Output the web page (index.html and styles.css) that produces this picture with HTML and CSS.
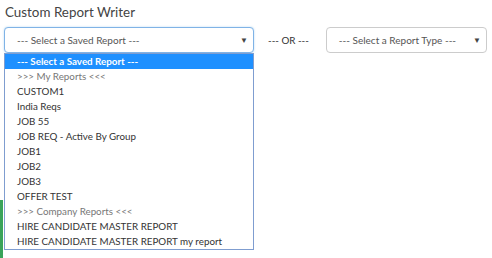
FILE: index.html
```html
<!DOCTYPE html>
<html lang="en">
<head>
    <meta charset="UTF-8">
    <title>Custom Report Writer</title>
    <link rel="stylesheet" href="styles.css">
</head>
<body>
    <div class="page">
        <h1 class="title">Custom Report Writer</h1>

        <div class="picker-row">
            <div class="picker picker-saved">
                <div class="select select-open">
                    <span>--- Select a Saved Report ---</span>
                    <span class="arrow">&#9660;</span>
                </div>
                <ul class="options">
                    <li class="selected">--- Select a Saved Report ---</li>
                    <li class="group">&gt;&gt;&gt; My Reports &lt;&lt;&lt;</li>
                    <li>CUSTOM1</li>
                    <li>India Reqs</li>
                    <li>JOB 55</li>
                    <li>JOB REQ - Active By Group</li>
                    <li>JOB1</li>
                    <li>JOB2</li>
                    <li>JOB3</li>
                    <li>OFFER TEST</li>
                    <li class="group">&gt;&gt;&gt; Company Reports &lt;&lt;&lt;</li>
                    <li>HIRE CANDIDATE MASTER REPORT</li>
                    <li>HIRE CANDIDATE MASTER REPORT my report</li>
                </ul>
            </div>

            <span class="or">--- OR ---</span>

            <div class="picker picker-type">
                <div class="select">
                    <span>--- Select a Report Type ---</span>
                    <span class="arrow">&#9660;</span>
                </div>
            </div>
        </div>

        <div class="side-tab"></div>
    </div>
</body>
</html>
```

FILE: styles.css
```css
* {
    margin: 0;
    padding: 0;
    box-sizing: border-box;
}

body {
    font-family: Lato, "Open Sans", sans-serif;
    background: #fff;
    color: #333;
    overflow: hidden;
}

.page {
    position: relative;
    height: 258px;
    padding: 2px 4px 0 4px;
}

.title {
    font-size: 13.4px;
    font-weight: normal;
    color: #444;
    padding-left: 1px;
    line-height: 20px;
}

.picker-row {
    display: flex;
    align-items: center;
    margin-top: 5px;
}

.picker {
    position: relative;
    flex-shrink: 0;
}

.picker-saved {
    width: 250px;
}

.picker-type {
    width: 161px;
}

.select {
    height: 26px;
    border: 1px solid #ccc;
    border-radius: 4px;
    display: flex;
    align-items: center;
    justify-content: space-between;
    padding: 0 5px 0 12px;
    font-size: 10px;
    color: #555;
    background: #fff;
}

.select-open {
    border-color: #80b3e6;
    box-shadow: 0 0 2px rgba(102, 175, 233, 0.5);
}

.arrow {
    font-size: 8px;
    color: #444;
}

.or {
    font-size: 9.8px;
    color: #333;
    white-space: nowrap;
    margin: 0 17px 0 14px;
}

.options {
    list-style: none;
    position: absolute;
    top: 26px;
    left: 0;
    width: 250px;
    border: 1px solid #7f9dd0;
    background: #fff;
    z-index: 2;
}

.options li {
    height: 15px;
    line-height: 15px;
    font-size: 9.8px;
    padding-left: 12px;
    color: #333;
    white-space: nowrap;
}

.options li.selected {
    background: #1e90ff;
    color: #fff;
    font-weight: bold;
}

.options li.group {
    color: #777;
}

.side-tab {
    position: absolute;
    left: 0;
    top: 200px;
    width: 3px;
    height: 58px;
    background: #3aa35a;
}
```
